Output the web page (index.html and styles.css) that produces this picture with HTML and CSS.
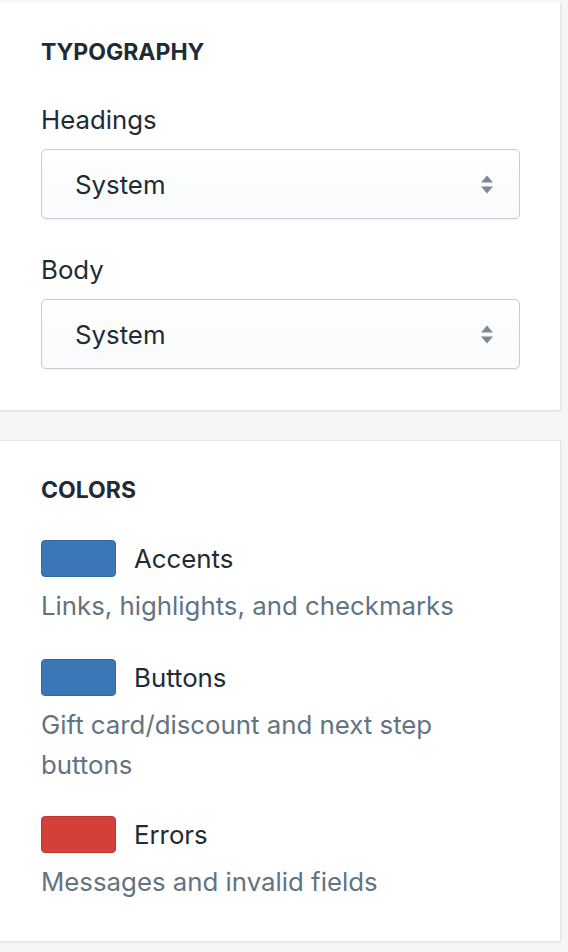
FILE: index.html
```html
<!DOCTYPE html>
<html>
<head>
<meta charset="utf-8">
<link rel="stylesheet" href="styles.css">
</head>
<body>
<div class="panel">
  <section class="card card-typo">
    <h2 class="card-title">TYPOGRAPHY</h2>
    <div class="field">
      <div class="field-label">Headings</div>
      <div class="select">
        <span class="select-value">System</span>
        <svg class="select-arrows" width="12" height="19" viewBox="0 0 12 19"><path d="M6 0.5 L12 7.5 H0 Z M6 18.5 L12 11.5 H0 Z" fill="#7b8896"/></svg>
      </div>
    </div>
    <div class="field">
      <div class="field-label">Body</div>
      <div class="select">
        <span class="select-value">System</span>
        <svg class="select-arrows" width="12" height="19" viewBox="0 0 12 19"><path d="M6 0.5 L12 7.5 H0 Z M6 18.5 L12 11.5 H0 Z" fill="#7b8896"/></svg>
      </div>
    </div>
  </section>
  <section class="card card-colors">
    <h2 class="card-title">COLORS</h2>
    <div class="color-item">
      <div class="color-row"><span class="swatch swatch-blue"></span><span class="color-name">Accents</span></div>
      <p class="color-desc">Links, highlights, and checkmarks</p>
    </div>
    <div class="color-item">
      <div class="color-row"><span class="swatch swatch-blue"></span><span class="color-name">Buttons</span></div>
      <p class="color-desc">Gift card/discount and next step buttons</p>
    </div>
    <div class="color-item color-item-last">
      <div class="color-row"><span class="swatch swatch-red"></span><span class="color-name">Errors</span></div>
      <p class="color-desc">Messages and invalid fields</p>
    </div>
  </section>
</div>
</body>
</html>
```
FILE: styles.css
```css
html, body {
  margin: 0;
  padding: 0;
}
body {
  background: #f4f6f8;
  font-family: Inter, "Noto Sans", sans-serif;
  color: #212b36;
  width: 568px;
  height: 952px;
  overflow: hidden;
}
.panel {
  display: flex;
  flex-direction: column;
  gap: 30px;
  padding-top: 3px;
  width: 561px;
}
.card {
  background: #fff;
  border-top: 1px solid #e3e6ea;
  border-right: 1px solid #e3e6ea;
  box-shadow: 0 1px 2px rgba(63, 63, 68, 0.15);
  padding: 0 40px 0 41px;
}
.card-typo {
  border-top: none;
  height: 407px;
  box-sizing: border-box;
  padding-top: 36px;
}
.card-colors {
  height: 501px;
  box-sizing: border-box;
  padding-top: 36px;
}
.card-title {
  margin: 0;
  font-size: 23px;
  font-weight: 700;
  line-height: 26px;
  color: #212b36;
}
.field {
  margin-top: 39px;
}
.field + .field {
  margin-top: 35px;
}
.field-label {
  font-size: 25.8px;
  line-height: 32px;
  margin-bottom: 13px;
}
.select {
  box-sizing: border-box;
  height: 70px;
  border: 1px solid #c4cdd5;
  border-radius: 5px;
  background: linear-gradient(#ffffff, #f9fafb);
  box-shadow: 0 1px 0 rgba(22, 29, 37, 0.05);
  display: flex;
  align-items: center;
  justify-content: space-between;
  padding: 0 26px 0 33px;
}
.select-value {
  font-size: 25.8px;
}
.select-arrows {
  display: block;
}
.color-item {
  margin-top: 33px;
}
.card-colors .card-title + .color-item {
  margin-top: 37px;
}
.card-colors .color-item-last {
  margin-top: 31px;
}
.color-row {
  display: flex;
  align-items: center;
  gap: 18px;
}
.swatch {
  box-sizing: border-box;
  width: 75px;
  height: 37px;
  border-radius: 4px;
  border: 1px solid;
  flex: none;
}
.swatch-blue {
  background: #3b77b7;
  border-color: #3168a5;
}
.swatch-red {
  background: #d3403a;
  border-color: #bd3731;
}
.color-name {
  font-size: 25.8px;
  line-height: 37px;
}
.color-desc {
  margin: 9px 0 0;
  font-size: 25.8px;
  line-height: 40px;
  color: #637381;
}
```
